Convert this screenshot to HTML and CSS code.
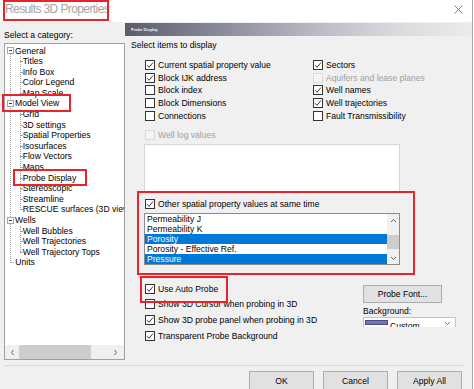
FILE: index.html
```html
<!doctype html>
<html lang="en">
  <head>
    <meta charset="UTF-8" />
    <title>Results 3D Properties</title>
    <link rel="stylesheet" href="styles.css">
  </head>
  <body>
    <div class="window">
      <div class="titlebar">
        <span class="title">Results 3D Properties</span>
        <svg class="close" width="9" height="9" viewBox="0 0 9 9"><path d="M0.5 0.5L8.5 8.5M8.5 0.5L0.5 8.5" stroke="#707070" stroke-width="0.9" fill="none"/></svg>
      </div>

      <div class="main">
        <div class="left">
          <div class="cat-label">Select a category:</div>
          <div class="tree">
            <div class="tree-body">
              <ul class="tree-list">
                <li><span class="toggle"></span>General
                  <ul class="children">
                    <li>Titles</li>
                    <li>Info Box</li>
                    <li>Color Legend</li>
                    <li>Map Scale</li>
                  </ul>
                </li>
                <li><span class="toggle"></span>Model View
                  <ul class="children">
                    <li>Grid</li>
                    <li>3D settings</li>
                    <li>Spatial Properties</li>
                    <li>Isosurfaces</li>
                    <li>Flow Vectors</li>
                    <li>Maps</li>
                    <li>Probe Display</li>
                    <li>Stereoscopic</li>
                    <li>Streamline</li>
                    <li>RESCUE surfaces (3D view)</li>
                  </ul>
                </li>
                <li><span class="toggle"></span>Wells
                  <ul class="children">
                    <li>Well Bubbles</li>
                    <li>Well Trajectories</li>
                    <li>Well Trajectory Tops</li>
                  </ul>
                </li>
                <li class="leaf">Units</li>
              </ul>
            </div>
            <div class="hscroll">
              <svg class="arrow" width="5" height="7" viewBox="0 0 5 7"><path d="M3.5 1L1.5 3.5L3.5 6" stroke="#606060" fill="none"/></svg>
              <span class="hthumb"></span>
              <svg class="arrow" width="5" height="7" viewBox="0 0 5 7"><path d="M1.5 1L3.5 3.5L1.5 6" stroke="#606060" fill="none"/></svg>
            </div>
          </div>
        </div>

        <div class="panel">
          <div class="panel-head">Probe Display</div>
          <div class="panel-label">Select items to display</div>

          <div class="items">
            <div class="check"><span class="box"><svg width="8" height="8" viewBox="0 0 8 8"><path d="M1 4.2L3 6.3L7 1.5" stroke="#222" stroke-width="0.9" fill="none"/></svg></span>Current spatial property value</div>
            <div class="check"><span class="box"><svg width="8" height="8" viewBox="0 0 8 8"><path d="M1 4.2L3 6.3L7 1.5" stroke="#222" stroke-width="0.9" fill="none"/></svg></span>Sectors</div>
            <div class="check"><span class="box"><svg width="8" height="8" viewBox="0 0 8 8"><path d="M1 4.2L3 6.3L7 1.5" stroke="#222" stroke-width="0.9" fill="none"/></svg></span>Block IJK address</div>
            <div class="check off"><span class="box"></span>Aquifers and lease planes</div>
            <div class="check"><span class="box"></span>Block index</div>
            <div class="check"><span class="box"><svg width="8" height="8" viewBox="0 0 8 8"><path d="M1 4.2L3 6.3L7 1.5" stroke="#222" stroke-width="0.9" fill="none"/></svg></span>Well names</div>
            <div class="check"><span class="box"></span>Block Dimensions</div>
            <div class="check"><span class="box"><svg width="8" height="8" viewBox="0 0 8 8"><path d="M1 4.2L3 6.3L7 1.5" stroke="#222" stroke-width="0.9" fill="none"/></svg></span>Well trajectories</div>
            <div class="check"><span class="box"></span>Connections</div>
            <div class="check"><span class="box"></span>Fault Transmissibility</div>
          </div>

          <div class="check off well-log"><span class="box"></span>Well log values</div>
          <div class="log-box"></div>

          <div class="check other"><span class="box"><svg width="8" height="8" viewBox="0 0 8 8"><path d="M1 4.2L3 6.3L7 1.5" stroke="#222" stroke-width="0.9" fill="none"/></svg></span>Other spatial property values at same time</div>
          <div class="listbox">
            <div class="list-items">
              <div class="list-row">Permeability J</div>
              <div class="list-row">Permeability K</div>
              <div class="list-row selected">Porosity</div>
              <div class="list-row">Porosity - Effective Ref.</div>
              <div class="list-row selected">Pressure</div>
            </div>
            <div class="vscroll">
              <div class="vbtn"><svg width="7" height="5" viewBox="0 0 7 5"><path d="M1 4L3.5 1.5L6 4" stroke="#606060" fill="none"/></svg></div>
              <div class="vgap"></div>
              <div class="vthumb"></div>
              <div class="vrest"></div>
              <div class="vbtn"><svg width="7" height="5" viewBox="0 0 7 5"><path d="M1 1L3.5 3.5L6 1" stroke="#606060" fill="none"/></svg></div>
            </div>
          </div>

          <div class="lower">
            <div class="lower-checks">
              <div class="check"><span class="box"><svg width="8" height="8" viewBox="0 0 8 8"><path d="M1 4.2L3 6.3L7 1.5" stroke="#222" stroke-width="0.9" fill="none"/></svg></span>Use Auto Probe</div>
              <div class="check"><span class="box"></span>Show 3D Cursor when probing in 3D</div>
              <div class="check"><span class="box"><svg width="8" height="8" viewBox="0 0 8 8"><path d="M1 4.2L3 6.3L7 1.5" stroke="#222" stroke-width="0.9" fill="none"/></svg></span>Show 3D probe panel when probing in 3D</div>
              <div class="check"><span class="box"><svg width="8" height="8" viewBox="0 0 8 8"><path d="M1 4.2L3 6.3L7 1.5" stroke="#222" stroke-width="0.9" fill="none"/></svg></span>Transparent Probe Background</div>
            </div>
            <div class="lower-side">
              <div class="btn font-btn">Probe Font...</div>
              <div class="bg-label">Background:</div>
              <div class="combo">
                <span class="swatch"></span>
                <span class="combo-text">Custom</span>
                <svg class="combo-arrow" width="7" height="5" viewBox="0 0 7 5"><path d="M1 1L3.5 3.5L6 1" stroke="#707070" fill="none"/></svg>
              </div>
            </div>
          </div>
        </div>
      </div>

      <div class="separator"></div>
      <div class="buttons">
        <div class="btn">OK</div>
        <div class="btn">Cancel</div>
        <div class="btn">Apply All</div>
      </div>

      <!-- annotation boxes drawn over the dialog -->
      <div class="mark mark-title"></div>
      <div class="mark mark-model"></div>
      <div class="mark mark-probe"></div>
      <div class="mark mark-other"></div>
      <div class="mark mark-auto"></div>
    </div>
  </body>
</html>
```

FILE: styles.css
```css
body {
  margin: 0;
  background: #fff;
  font-family: "Liberation Sans", Arial, sans-serif;
  font-size: 8.6px;
  color: #000;
}
.window {
  position: relative;
  width: 472px;
  height: 389px;
  border-right: 1px solid #a8a8a8;
  background: #f0f0f0;
  overflow: hidden;
}
.titlebar {
  height: 22px;
  background: #fff;
  display: flex;
  align-items: flex-start;
  justify-content: space-between;
  padding: 1.5px 0 0 5px;
  box-sizing: border-box;
}
.title {
  font-size: 12px;
  line-height: 14px;
  letter-spacing: -0.6px;
  color: #a4a4a4;
}
.close {
  margin: 3.5px 9px 0 0;
}
.main {
  height: 340px;
  display: flex;
}
.left {
  width: 125px;
  padding-left: 4px;
  box-sizing: border-box;
}
.cat-label {
  padding-top: 8px;
  line-height: 11px;
  margin-bottom: 2px;
}
.tree {
  height: 317px;
  border: 1px solid #a0a0a0;
  background: #fff;
  display: flex;
  flex-direction: column;
  box-sizing: border-box;
}
.tree-body {
  flex: 1;
  overflow: hidden;
}
.tree-list,
.children {
  list-style: none;
  margin: 0;
  padding: 0;
}
.tree-list {
  position: relative;
  padding-top: 1.5px;
  line-height: 10.6px;
  white-space: nowrap;
}
.tree-list::before {
  content: "";
  position: absolute;
  left: 5px;
  top: 6px;
  bottom: 5px;
  border-left: 1px dotted #a0a0a0;
}
.toggle {
  position: relative;
  display: inline-block;
  width: 7px;
  height: 7px;
  margin: 0 1px 0 2px;
  border: 1px solid #a6a6a6;
  background: #fff;
  box-sizing: border-box;
  vertical-align: -0.5px;
}
.toggle::after {
  content: "";
  position: absolute;
  left: 1px;
  top: 2px;
  width: 3px;
  height: 1px;
  background: #404040;
}
.children {
  position: relative;
  padding-left: 17.7px;
}
.children::before {
  content: "";
  position: absolute;
  left: 14.5px;
  top: 0;
  bottom: 5px;
  border-left: 1px dotted #a0a0a0;
}
.children li {
  position: relative;
}
.children li::before,
.leaf::before {
  content: "";
  position: absolute;
  top: 5px;
  left: -3px;
  width: 2.5px;
  border-top: 1px dotted #a0a0a0;
}
.leaf {
  position: relative;
  padding-left: 10.3px;
}
.leaf::before {
  left: 6px;
  width: 3px;
}
.hscroll {
  height: 14px;
  background: #f0f0f0;
  display: flex;
  align-items: center;
}
.arrow {
  margin: 0 4px 0 5px;
}
.hthumb {
  width: 72px;
  height: 14px;
  background: #cdcdcd;
  margin-right: auto;
}
.hscroll .arrow:last-child {
  margin: 0 6px 0 0;
}
.panel {
  width: 347px;
  padding-top: 1px;
}
.panel-head {
  height: 13px;
  line-height: 13px;
  padding-left: 6px;
  font-size: 4px;
  font-weight: bold;
  color: #f4f4f4;
  background: linear-gradient(to right, #5a5c6e 0%, #8a8c9b 28%, #b9bac3 55%, #dcdce0 80%, #ececec 100%);
}
.panel-label {
  margin: 4px 0 0 6px;
  line-height: 11px;
}
.items {
  display: grid;
  grid-template-columns: 168px 1fr;
  grid-auto-rows: 12.7px;
  margin: 7.6px 0 0 20px;
}
.check {
  display: flex;
  align-items: center;
  gap: 3px;
  white-space: nowrap;
}
.box {
  width: 10px;
  height: 10px;
  border: 1px solid #333;
  background: #fff;
  box-sizing: border-box;
  display: flex;
  align-items: center;
  justify-content: center;
  flex: none;
}
.off {
  color: #a0a0a0;
}
.off .box {
  border-color: #dadada;
  background: #f4f4f4;
}
.well-log {
  height: 12.7px;
  margin: 6.5px 0 0 20px;
}
.log-box {
  width: 256px;
  height: 49px;
  margin: 2.3px 0 0 19px;
  background: #fff;
  border: 1px solid #d6d6d6;
  box-sizing: border-box;
}
.other {
  height: 12.7px;
  margin: 5.6px 0 0 20px;
}
.listbox {
  width: 256px;
  height: 52px;
  margin: 2.6px 0 0 19px;
  border: 1px solid #8c8c8c;
  background: #fff;
  box-sizing: border-box;
  display: flex;
}
.list-items {
  flex: 1;
}
.list-row {
  height: 10px;
  line-height: 10px;
  padding-left: 2px;
  white-space: nowrap;
}
.selected {
  background: #0078d7;
  color: #fff;
}
.vscroll {
  width: 12px;
  background: #f0f0f0;
  display: flex;
  flex-direction: column;
}
.vbtn {
  height: 12px;
  display: flex;
  align-items: center;
  justify-content: center;
}
.vgap {
  height: 8.7px;
}
.vthumb {
  height: 14.3px;
  background: #cdcdcd;
}
.vrest {
  flex: 1;
}
.lower {
  display: flex;
  margin-top: 15.4px;
}
.lower-checks {
  width: 238px;
  padding-left: 20px;
  box-sizing: border-box;
}
.lower-checks .check {
  height: 15.8px;
}
.lower-side {
  width: 93px;
  display: flex;
  flex-direction: column;
}
.btn {
  width: 65px;
  height: 19px;
  background: #e1e1e1;
  border: 1px solid #adadad;
  box-sizing: border-box;
  display: flex;
  align-items: center;
  justify-content: center;
}
.font-btn {
  width: 79px;
  height: 18px;
  margin-top: 4.6px;
}
.bg-label {
  margin-top: 2.5px;
  line-height: 11px;
}
.combo {
  height: 10px;
  margin-top: 0.5px;
  background: #fff;
  border: 1px solid #c4c4c4;
  border-bottom: 0;
  box-sizing: border-box;
  overflow: hidden;
  display: flex;
  align-items: flex-start;
  padding-left: 1px;
}
.swatch {
  width: 23px;
  height: 5px;
  margin-top: 1.7px;
  background: #7874b8;
  border: 1px solid #4a4a86;
  box-sizing: border-box;
  flex: none;
}
.combo-text {
  margin: 2.5px 0 0 2px;
  line-height: 10px;
}
.combo-arrow {
  margin: 3px 4px 0 auto;
}
.separator {
  width: 461px;
  height: 1px;
  margin: 3px 0 0 4px;
  background: #dadada;
}
.buttons {
  display: flex;
  justify-content: flex-end;
  gap: 9px;
  margin-top: 5px;
  padding-right: 10px;
}
.mark {
  position: absolute;
  border: 2px solid #e8232b;
  box-sizing: border-box;
}
.mark-title {
  left: 3px;
  top: 0;
  width: 106px;
  height: 21px;
}
.mark-model {
  left: 2px;
  top: 94px;
  width: 69px;
  height: 18px;
}
.mark-probe {
  left: 13px;
  top: 169px;
  width: 74px;
  height: 17px;
}
.mark-other {
  left: 137px;
  top: 191px;
  width: 278px;
  height: 84px;
}
.mark-auto {
  left: 140px;
  top: 276px;
  width: 88px;
  height: 27px;
}
```
